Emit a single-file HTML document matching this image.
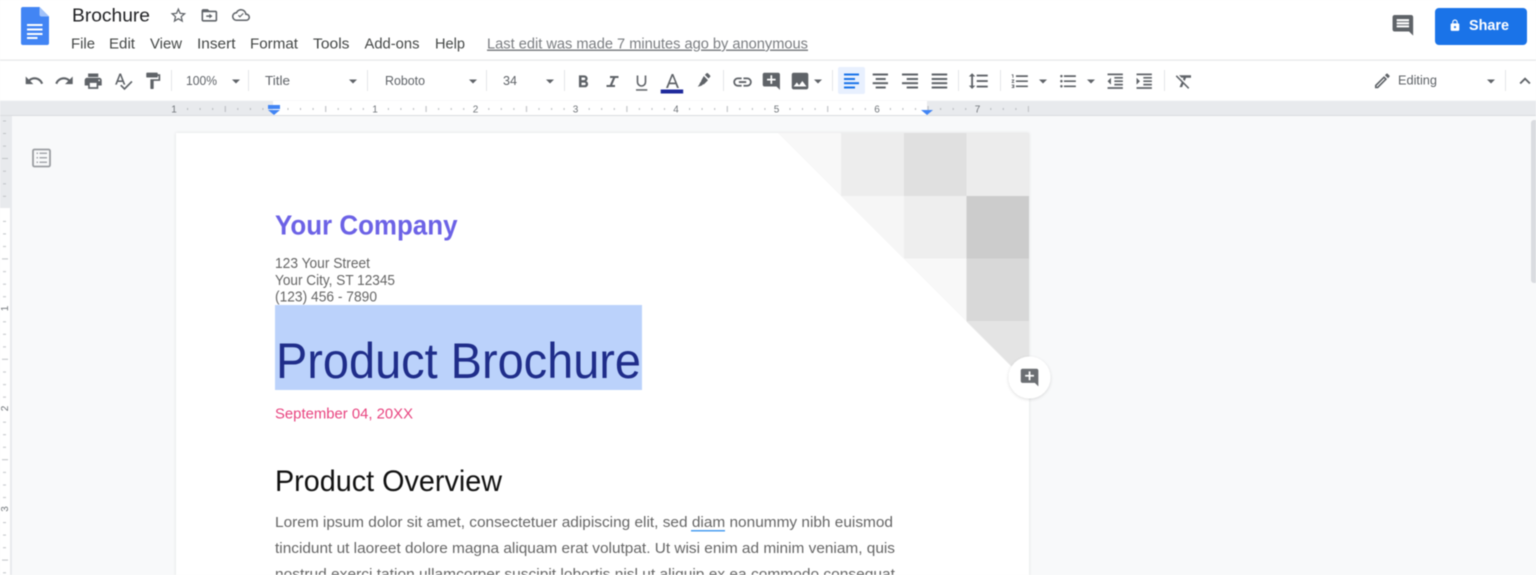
<!DOCTYPE html>
<html>
<head>
<meta charset="utf-8">
<style>
html,body{margin:0;padding:0;width:1536px;height:575px;overflow:hidden;background:#f8f9fa}
svg{display:block;filter:blur(.4px)}
text{font-family:"Liberation Sans",sans-serif}
.i{fill:#5f6368}
.sep{fill:#e3e5e8}
.m{font-size:14.5px;fill:#444746}
.t{font-size:12.5px;fill:#5f6368}
.r{font-size:10px;fill:#70757a;text-anchor:middle}
.b{font-size:15px;fill:#666}
</style>
</head>
<body>
<svg xmlns="http://www.w3.org/2000/svg" width="1536" height="575" viewBox="0 0 1536 575">
<defs>
<filter id="sh" x="-5%" y="-5%" width="110%" height="110%"><feDropShadow dx="0" dy="0" stdDeviation="1.5" flood-color="#000" flood-opacity=".1"/></filter>
<filter id="sc" x="-30%" y="-30%" width="160%" height="160%"><feDropShadow dx="0" dy="1" stdDeviation="1.6" flood-color="#000" flood-opacity=".14"/></filter>
<pattern id="tx" x="275" y="106" width="100.4" height="6" patternUnits="userSpaceOnUse">
<rect x="12.5" y="2" width="1" height="2" fill="#b5b8bc"/><rect x="25" y="2" width="1" height="2" fill="#b5b8bc"/><rect x="37.6" y="2" width="1" height="2" fill="#b5b8bc"/>
<rect x="50.2" y="0" width="1" height="6" fill="#b5b8bc"/>
<rect x="62.7" y="2" width="1" height="2" fill="#b5b8bc"/><rect x="75.3" y="2" width="1" height="2" fill="#b5b8bc"/><rect x="87.8" y="2" width="1" height="2" fill="#b5b8bc"/>
</pattern>
<pattern id="ty" x="2" y="108" width="6" height="100.4" patternUnits="userSpaceOnUse">
<rect x="1" y="12.5" width="3" height="1" fill="#bfc2c6"/><rect x="1" y="25" width="3" height="1" fill="#bfc2c6"/><rect x="1" y="37.6" width="3" height="1" fill="#bfc2c6"/>
<rect x="0" y="50" width="6" height="1" fill="#bfc2c6"/>
<rect x="1" y="62.7" width="3" height="1" fill="#bfc2c6"/><rect x="1" y="75.3" width="3" height="1" fill="#bfc2c6"/><rect x="1" y="87.8" width="3" height="1" fill="#bfc2c6"/>
</pattern>
<clipPath id="tri"><polygon points="778,133 1029,133 1029,384"/></clipPath>
</defs>

<!-- backgrounds -->
<rect width="1536" height="575" fill="#f8f9fa"/>
<rect width="1536" height="100" fill="#fff"/>
<rect y="59.5" width="1536" height="1.2" fill="#e6e7e9"/>

<!-- ruler -->
<rect y="101" width="1536" height="14" fill="#e8eaed"/>
<rect x="273" y="101" width="654" height="14" fill="#fff"/>
<rect y="115" width="1536" height="1" fill="#dadce0"/>
<rect x="175" y="106" width="854" height="6" fill="url(#tx)"/>
<rect x="0" y="116" width="10" height="92" fill="#e8eaed"/>
<rect x="0" y="208" width="10" height="367" fill="#fff"/>
<rect x="10" y="116" width="2" height="459" fill="#e8eaed"/>
<rect x="2" y="116" width="6" height="459" fill="url(#ty)"/>
<text class="r" x="174" y="112.500">1</text>
<text class="r" x="375" y="112.500">1</text>
<text class="r" x="475.500" y="112.500">2</text>
<text class="r" x="575.500" y="112.500">3</text>
<text class="r" x="676" y="112.500">4</text>
<text class="r" x="776.500" y="112.500">5</text>
<text class="r" x="877" y="112.500">6</text>
<text class="r" x="977.500" y="112.500">7</text>
<text class="r" transform="translate(8,308.500) rotate(-90)">1</text>
<text class="r" transform="translate(8,408.500) rotate(-90)">2</text>
<text class="r" transform="translate(8,509) rotate(-90)">3</text>
<rect x="268" y="105" width="12" height="4" fill="#4285f4"/>
<polygon points="268,110 280,110 274,115" fill="#4285f4"/>
<polygon points="921,110 933,110 927,115" fill="#4285f4"/>

<!-- logo -->
<path d="M23 7h16.500L49 16.500V43a2 2 0 0 1-2 2H23a2 2 0 0 1-2-2V9a2 2 0 0 1 2-2z" fill="#4285f4"/>
<path d="M39.500 7L49 16.500h-7.500a2 2 0 0 1-2-2z" fill="#a1c2fa"/>
<rect x="27" y="24" width="15.500" height="2" fill="#fff"/><rect x="27" y="28.500" width="15.500" height="2" fill="#fff"/><rect x="27" y="33" width="15.500" height="2" fill="#fff"/><rect x="27" y="37" width="10.500" height="2" fill="#fff"/>

<!-- title row -->
<text x="72" y="21.500" font-size="18.500" fill="#202124" textLength="78" lengthAdjust="spacingAndGlyphs">Brochure</text>
<g class="i">
<path transform="translate(169,6) scale(.78)" d="M22 9.240l-7.190-.62L12 2 9.190 8.630 2 9.240l5.460 4.730L5.820 21 12 17.270 18.180 21l-1.630-7.030L22 9.240zM12 15.400l-3.760 2.270 1-4.280-3.320-2.880 4.380-.38L12 6.100l1.710 4.040 4.380.38-3.320 2.880 1 4.280L12 15.400z"/>
<path transform="translate(200,6) scale(.78)" d="M20 6h-8l-2-2H4c-1.100 0-2 .9-2 2v12c0 1.100.9 2 2 2h16c1.100 0 2-.9 2-2V8c0-1.100-.9-2-2-2zm0 12H4V8h16v10zM12 16l4-3-4-3v2H8v2h4z"/>
<path transform="translate(232,6) scale(.75)" d="M19.350 10.040C18.670 6.590 15.640 4 12 4 9.110 4 6.600 5.640 5.350 8.040 2.340 8.360 0 10.910 0 14c0 3.310 2.690 6 6 6h13c2.760 0 5-2.240 5-5 0-2.640-2.050-4.780-4.650-4.960zM19 18H6c-2.210 0-4-1.790-4-4 0-2.050 1.530-3.760 3.560-3.970l1.070-.11.5-.95C8.080 7.140 9.940 6 12 6c2.620 0 4.880 1.860 5.390 4.430l.3 1.500 1.530.11c1.560.1 2.780 1.410 2.780 2.960 0 1.650-1.350 3-3 3zm-8.500-2.500l-2.600-2.600 1.100-1.100 1.500 1.500 4-4 1.100 1.100z"/>
</g>

<!-- menu -->
<text class="m" x="71" y="48.500" textLength="24" lengthAdjust="spacingAndGlyphs">File</text>
<text class="m" x="109" y="48.500" textLength="26" lengthAdjust="spacingAndGlyphs">Edit</text>
<text class="m" x="150" y="48.500" textLength="32" lengthAdjust="spacingAndGlyphs">View</text>
<text class="m" x="197" y="48.500" textLength="38.500" lengthAdjust="spacingAndGlyphs">Insert</text>
<text class="m" x="250" y="48.500" textLength="48" lengthAdjust="spacingAndGlyphs">Format</text>
<text class="m" x="313" y="48.500" textLength="36.500" lengthAdjust="spacingAndGlyphs">Tools</text>
<text class="m" x="364.500" y="48.500" textLength="55" lengthAdjust="spacingAndGlyphs">Add-ons</text>
<text class="m" x="435" y="48.500" textLength="30" lengthAdjust="spacingAndGlyphs">Help</text>
<text x="487" y="48.500" font-size="14.500" fill="#7a7d81" text-decoration="underline" textLength="321" lengthAdjust="spacingAndGlyphs">Last edit was made 7 minutes ago by anonymous</text>

<!-- top right -->
<path class="i" transform="translate(1390.500,13) scale(1.030)" d="M21.990 4c0-1.100-.89-2-1.990-2H4c-1.100 0-2 .9-2 2v12c0 1.100.9 2 2 2h14l4 4-.01-18zM18 14H6v-2h12v2zm0-3H6V9h12v2zm0-3H6V6h12v2z"/>
<rect x="1435" y="8" width="92" height="37" rx="4" fill="#1a73e8"/>
<path transform="translate(1448.500,19) scale(.54)" fill="#fff" d="M18 8h-1V6c0-2.760-2.240-5-5-5S7 3.240 7 6v2H6c-1.100 0-2 .9-2 2v10c0 1.100.9 2 2 2h12c1.100 0 2-.9 2-2V10c0-1.100-.9-2-2-2zm-6 9c-1.100 0-2-.9-2-2s.9-2 2-2 2 .9 2 2-.9 2-2 2zm3.100-9H8.900V6c0-1.710 1.390-3.100 3.100-3.100 1.710 0 3.100 1.390 3.100 3.100v2z"/>
<text x="1469" y="30" font-size="14.500" font-weight="bold" fill="#fff" textLength="40" lengthAdjust="spacingAndGlyphs">Share</text>

<!-- toolbar -->
<g class="sep">
<rect x="171" y="70" width="1" height="21"/><rect x="248" y="70" width="1" height="21"/><rect x="367" y="70" width="1" height="21"/><rect x="486" y="70" width="1" height="21"/><rect x="564" y="70" width="1" height="21"/><rect x="723" y="70" width="1" height="21"/><rect x="832" y="70" width="1" height="21"/><rect x="958" y="70" width="1" height="21"/><rect x="1000" y="70" width="1" height="21"/><rect x="1164" y="70" width="1" height="21"/><rect x="1505" y="70" width="1" height="21"/>
</g>
<g class="i">
<path transform="translate(24,70.500) scale(.85)" d="M12.500 8c-2.650 0-5.050.99-6.900 2.600L2 7v9h9l-3.620-3.620c1.390-1.160 3.160-1.880 5.120-1.880 3.540 0 6.550 2.310 7.600 5.500l2.370-.78C21.080 11.030 17.150 8 12.500 8z"/>
<path transform="translate(54,70.500) scale(.85)" d="M18.400 10.600C16.550 8.990 14.150 8 11.500 8c-4.650 0-8.580 3.030-9.960 7.220L3.900 16c1.050-3.190 4.050-5.500 7.600-5.500 1.950 0 3.730.72 5.120 1.880L13 16h9V7l-3.600 3.600z"/>
<path transform="translate(83,71) scale(.85)" d="M19 8H5c-1.660 0-3 1.340-3 3v6h4v4h12v-4h4v-6c0-1.660-1.340-3-3-3zm-3 11H8v-5h8v5zm3-7c-.55 0-1-.45-1-1s.45-1 1-1 1 .45 1 1-.45 1-1 1zm-1-9H6v4h12V3z"/>
<path transform="translate(113,71) scale(.85)" d="M12.450 16h2.090L9.430 3H7.570L2.460 16h2.090l1.120-3h5.640l1.140 3zm-6.020-5L8.500 5.480 10.570 11H6.430zm15.160.59l-8.090 8.090L9.830 16l-1.410 1.410 5.090 5.090L23 13l-1.410-1.410z"/>
<path transform="translate(143,71) scale(.82)" d="M18 4V3c0-.55-.45-1-1-1H5c-.55 0-1 .45-1 1v4c0 .55.45 1 1 1h12c.55 0 1-.45 1-1V6h1v4H9v11c0 .55.45 1 1 1h2c.55 0 1-.45 1-1v-9h8V4h-3z"/>
<polygon points="232,79.500 240,79.500 236,83.500"/><polygon points="349,79.500 357,79.500 353,83.500"/><polygon points="469,79.500 477,79.500 473,83.500"/><polygon points="546,79.500 554,79.500 550,83.500"/><polygon points="814,79.500 822,79.500 818,83.500"/><polygon points="1039,79.500 1047,79.500 1043,83.500"/><polygon points="1087,79.500 1095,79.500 1091,83.500"/><polygon points="1487,79.500 1495,79.500 1491,83.500"/>
<!-- bold -->
<path transform="translate(573,72) scale(.85)" d="M15.600 10.790c.97-.67 1.650-1.770 1.650-2.790 0-2.260-1.750-4-4-4H7v14h7.040c2.090 0 3.710-1.700 3.710-3.790 0-1.520-.86-2.820-2.150-3.420zM10 6.500h3c.83 0 1.500.67 1.500 1.500s-.67 1.500-1.500 1.500h-3v-3zm3.500 9H10v-3h3.500c.83 0 1.500.67 1.500 1.500s-.67 1.500-1.500 1.500z"/>
<!-- italic -->
<path d="M610 76h8.500v2h-3.300l-3 7h2.800v2h-8.500v-2h3.400l3-7H610z"/>
<!-- underline -->
<path d="M637.500 75.500v6.500a4 4 0 0 0 8 0v-6.500" fill="none" stroke="#5f6368" stroke-width="1.600"/>
<rect x="636" y="89.200" width="11.300" height="1.500"/>
<!-- text colour A -->
<path d="M672 74h1.600l5.700 14h-2l-1.400-3.700h-6.200L668.300 88h-2zm-1.700 8.500h5.100l-2.600-6.300z" transform="translate(-.3,0)"/>
<!-- highlighter -->
<path d="M706.500 73.300a1 1 0 0 1 1.400 0l2.200 2.200a1 1 0 0 1 0 1.400l-1.600 1.600-3.600-3.600zM703.800 76l4.200 4.200-4 4-1 .2-1.200 1.100-1.700.6-2.400.6 1.700-2.300.6-1.600 1-1.100.2-1z"/>
<path transform="translate(731.500,71) scale(.92)" d="M3.900 12c0-1.710 1.390-3.100 3.100-3.100h4V7H7c-2.760 0-5 2.240-5 5s2.240 5 5 5h4v-1.900H7c-1.710 0-3.100-1.390-3.100-3.100zM8 13h8v-2H8v2zm9-6h-4v1.900h4c1.710 0 3.100 1.390 3.100 3.100s-1.390 3.100-3.100 3.100h-4V17h4c2.760 0 5-2.240 5-5s-2.240-5-5-5z"/>
<path transform="translate(761,71) scale(.86)" d="M22 4c0-1.100-.9-2-2-2H4c-1.100 0-2 .9-2 2v12c0 1.100.9 2 2 2h14l4 4V4zm-5 7h-4v4h-2v-4H7V9h4V5h2v4h4v2z"/>
<path transform="translate(789,70) scale(.92)" d="M21 19V5c0-1.100-.9-2-2-2H5c-1.100 0-2 .9-2 2v14c0 1.100.9 2 2 2h14c1.100 0 2-.9 2-2zM8.500 13.500l2.500 3.010L14.500 12l4.500 6H5l3.500-4.500z"/>
<!-- align center -->
<rect x="872.700" y="73.500" width="15.300" height="2"/><rect x="875.700" y="78" width="10" height="2"/><rect x="872.700" y="82.200" width="15.300" height="2"/><rect x="875.700" y="86.500" width="10" height="2"/>
<!-- align right -->
<rect x="902" y="73.500" width="16" height="2"/><rect x="906.700" y="78" width="11.300" height="2"/><rect x="902" y="82.200" width="16" height="2"/><rect x="906.700" y="86.500" width="11.300" height="2"/>
<!-- justify -->
<rect x="931.700" y="73.500" width="15.500" height="2"/><rect x="931.700" y="78" width="15.500" height="2"/><rect x="931.700" y="82.200" width="15.500" height="2"/><rect x="931.700" y="86.500" width="15.500" height="2"/>
<path transform="translate(967.500,70) scale(.92)" d="M6 7h2.500L5 3.500 1.500 7H4v10H1.500L5 20.500 8.500 17H6V7zm4-2v2h12V5H10zm0 14h12v-2H10v2zm0-6h12v-2H10v2z"/>
<path transform="translate(1010,71) scale(.85)" d="M2 17h2v.5H3v1h1v.5H2v1h3v-4H2v1zm1-9h1V4H2v1h1v3zm-1 3h1.800L2 13.100v.9h3v-1H3.200L5 10.900V10H2v1zm5-6v2h14V5H7zm0 14h14v-2H7v2zm0-6h14v-2H7v2z"/>
<path transform="translate(1058,71) scale(.85)" d="M4 10.500c-.83 0-1.500.67-1.500 1.500s.67 1.500 1.500 1.500 1.500-.67 1.500-1.500-.67-1.500-1.500-1.500zm0-6c-.83 0-1.500.67-1.500 1.500S3.170 7.500 4 7.500 5.500 6.830 5.500 6 4.830 4.500 4 4.500zm0 12c-.83 0-1.500.68-1.500 1.500s.68 1.500 1.500 1.500 1.500-.68 1.500-1.500-.67-1.500-1.500-1.500zM7 19h14v-2H7v2zm0-6h14v-2H7v2zm0-8v2h14V5H7z"/>
<path transform="translate(1105,71) scale(.85)" d="M11 17h10v-2H11v2zm-8-5l4 4V8l-4 4zm0 9h18v-2H3v2zM3 3v2h18V3H3zm8 6h10V7H11v2zm0 4h10v-2H11v2z"/>
<path transform="translate(1134,71) scale(.85)" d="M3 21h18v-2H3v2zM3 8v8l4-4-4-4zm8 9h10v-2H11v2zM3 3v2h18V3H3zm8 6h10V7H11v2zm0 4h10v-2H11v2z"/>
<path transform="translate(1174,71) scale(.85)" d="M3.270 5L2 6.270l6.970 6.970L6.500 19h3l1.570-3.660L16.730 21 18 19.730 3.550 5.270 3.270 5zM6 5v.18L8.820 8h2.400l-.72 1.680 2.100 2.100L14.210 8H20V5H6z"/>
<path transform="translate(1372.500,71) scale(.82)" d="M3 17.250V21h3.750L17.810 9.940l-3.750-3.750L3 17.250zM5.920 19H5v-.92l9.060-9.060.92.92L5.920 19zM20.710 5.630l-2.340-2.340c-.39-.39-1.020-.39-1.410 0l-1.830 1.830 3.750 3.750 1.830-1.830c.39-.39.39-1.020 0-1.410z"/>
<path transform="translate(1514,70) scale(.92)" d="M7.410 15.410L12 10.830l4.590 4.580L18 14l-6-6-6 6z"/>
</g>
<rect x="660.700" y="89.500" width="22.500" height="4" fill="#1f2a9c"/>
<rect x="838" y="67" width="27" height="27" rx="2" fill="#e8f0fe"/>
<g fill="#1a73e8"><rect x="844" y="73.500" width="15" height="2"/><rect x="844" y="78" width="11" height="2"/><rect x="844" y="82.200" width="15" height="2"/><rect x="844" y="86.500" width="11" height="2"/></g>
<text class="t" x="186" y="85" textLength="31" lengthAdjust="spacingAndGlyphs">100%</text>
<text class="t" x="265" y="85" textLength="25" lengthAdjust="spacingAndGlyphs">Title</text>
<text class="t" x="385" y="85" textLength="40" lengthAdjust="spacingAndGlyphs">Roboto</text>
<text class="t" x="503" y="85" textLength="14" lengthAdjust="spacingAndGlyphs">34</text>
<text class="t" x="1398" y="84.500" textLength="39" lengthAdjust="spacingAndGlyphs">Editing</text>

<!-- left outline icon -->
<rect x="33" y="149.500" width="17" height="17" rx="1.500" fill="none" stroke="#9a9da1" stroke-width="1.800"/>
<g fill="#a5a8ac"><rect x="36.500" y="152.500" width="1.500" height="1.500"/><rect x="39.500" y="152.500" width="7.500" height="1.500"/><rect x="36.500" y="157" width="1.500" height="1.500"/><rect x="39.500" y="157" width="7.500" height="1.500"/><rect x="36.500" y="161.500" width="1.500" height="1.500"/><rect x="39.500" y="161.500" width="7.500" height="1.500"/></g>

<!-- page -->
<rect x="176" y="133" width="853" height="460" fill="#fff" filter="url(#sh)"/>
<g clip-path="url(#tri)">
<rect x="778" y="133" width="63" height="63" fill="#f8f8f8"/>
<rect x="841" y="133" width="63" height="63" fill="#ededed"/>
<rect x="904" y="133" width="62.500" height="63" fill="#e0e0e0"/>
<rect x="966.500" y="133" width="62.500" height="63" fill="#ececec"/>
<rect x="841" y="196" width="63" height="62.500" fill="#f6f6f6"/>
<rect x="904" y="196" width="62.500" height="62.500" fill="#eeeeee"/>
<rect x="966.500" y="196" width="62.500" height="62.500" fill="#cccccc"/>
<rect x="904" y="258.500" width="62.500" height="62.500" fill="#f8f8f8"/>
<rect x="966.500" y="258.500" width="62.500" height="62.500" fill="#d8d8d8"/>
<rect x="966.500" y="321" width="62.500" height="63" fill="#e4e4e4"/>
</g>

<!-- doc text -->
<text x="275" y="234.500" font-size="28" font-weight="bold" fill="#6c62e6" textLength="182.500" lengthAdjust="spacingAndGlyphs">Your Company</text>
<text x="275" y="268" font-size="14.500" fill="#666" textLength="95" lengthAdjust="spacingAndGlyphs">123 Your Street</text>
<text x="275" y="285" font-size="14.500" fill="#666" textLength="120" lengthAdjust="spacingAndGlyphs">Your City, ST 12345</text>
<text x="275" y="301.500" font-size="14.500" fill="#666" textLength="102" lengthAdjust="spacingAndGlyphs">(123) 456 - 7890</text>
<rect x="275" y="305" width="367" height="85" fill="#bbd2fb"/>
<text x="276" y="378" font-size="50" fill="#1f2d8a" textLength="365" lengthAdjust="spacingAndGlyphs">Product Brochure</text>
<text x="275" y="418.500" font-size="15" fill="#e8437f" textLength="138" lengthAdjust="spacingAndGlyphs">September 04, 20XX</text>
<text x="275" y="491" font-size="29.500" fill="#111" textLength="227" lengthAdjust="spacingAndGlyphs">Product Overview</text>
<text class="b" x="275" y="527" textLength="618" lengthAdjust="spacingAndGlyphs">Lorem ipsum dolor sit amet, consectetuer adipiscing elit, sed diam nonummy nibh euismod</text>
<rect x="691" y="530" width="34" height="1.500" fill="#4a9df0"/>
<text class="b" x="275" y="553" textLength="620" lengthAdjust="spacingAndGlyphs">tincidunt ut laoreet dolore magna aliquam erat volutpat. Ut wisi enim ad minim veniam, quis</text>
<text class="b" x="275" y="579" textLength="620" lengthAdjust="spacingAndGlyphs">nostrud exerci tation ullamcorper suscipit lobortis nisl ut aliquip ex ea commodo consequat</text>

<!-- add comment fab -->
<circle cx="1029.500" cy="377.500" r="21" fill="#fff" filter="url(#sc)"/>
<path transform="translate(1019,367) scale(.88)" fill="#6b6e72" d="M22 4c0-1.100-.9-2-2-2H4c-1.100 0-2 .9-2 2v12c0 1.100.9 2 2 2h14l4 4V4zm-5 7h-4v4h-2v-4H7V9h4V5h2v4h4v2z"/>

<!-- scrollbar -->
<rect x="1531" y="120" width="7" height="163" rx="3" fill="#dadce0"/>
</svg>
</body>
</html>
